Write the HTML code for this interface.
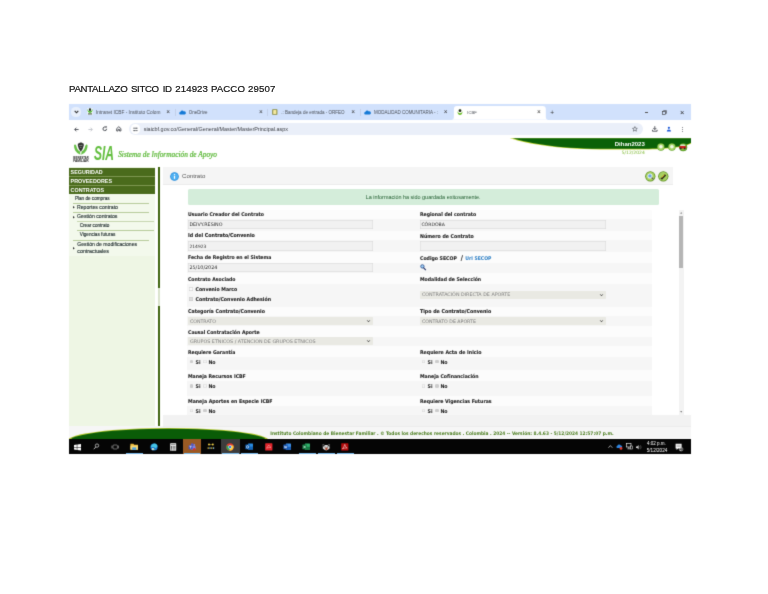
<!DOCTYPE html>
<html lang="es"><head><meta charset="utf-8"><title>PANTALLAZO SITCO ID 214923 PACCO 29507</title>
<style>
html,body{margin:0;padding:0;background:#ffffff;}
body{width:768px;height:594px;position:relative;overflow:hidden;font-family:"Liberation Sans",sans-serif;}
#shot div,#shot svg{position:absolute;display:block;}
#shot svg{overflow:visible;}
#shot{position:absolute;left:0;top:0;width:768px;height:594px;filter:url(#bl);}
#ttl{position:absolute;left:0;top:0;width:768px;height:103px;will-change:transform;}
.t{position:absolute;white-space:nowrap;line-height:1;margin:0;}
</style></head><body>
<svg width="0" height="0" style="position:absolute"><filter id="bl" x="0" y="0" width="100%" height="100%" color-interpolation-filters="sRGB"><feConvolveMatrix order="3" kernelMatrix="0.0144 0.0912 0.0144 0.0912 0.5776 0.0912 0.0144 0.0912 0.0144" edgeMode="duplicate"/></filter></svg>
<div id="shot">
<div style="left:68.75px;top:103.90px;width:622.25px;height:16.00px;background:#d1e1fc;"></div>
<div style="left:71.30px;top:107.00px;width:9.50px;height:9.80px;background:#e9f0fc;border-radius:4.6px;"></div>
<svg style="left:73.6px;top:110.2px" width="5" height="4" viewBox="0 0 5 4"><path d="M0.7 0.9 L2.5 2.8 L4.3 0.9" fill="none" stroke="#2a2a2a" stroke-width="1.1"/></svg>
<svg style="left:450px;top:106.3px" width="100" height="14" viewBox="0 0 100 14"><path d="M1.2 13.8 Q3.9 13.8 3.9 11 V3.2 Q3.9 0 7 0 H92.6 Q95.8 0 95.8 3.2 V11 Q95.8 13.8 98.5 13.8 Z" fill="#ffffff"/></svg>
<div style="left:68.75px;top:119.90px;width:622.25px;height:17.90px;background:#ffffff;"></div>
<div style="left:129.30px;top:122.70px;width:514.20px;height:12.80px;background:#eaeff9;border-radius:6.4px;"></div>
<div style="left:131.00px;top:123.80px;width:8.60px;height:10.00px;background:#ffffff;border-radius:4.6px;"></div>
<div style="left:68.75px;top:137.80px;width:622.25px;height:300.95px;background:#ffffff;"></div>
<div style="left:174.60px;top:108.60px;width:0.40px;height:7.20px;background:#c3d0e8;"></div>
<div style="left:267.30px;top:108.60px;width:0.40px;height:7.20px;background:#c3d0e8;"></div>
<div style="left:359.80px;top:108.60px;width:0.40px;height:7.20px;background:#c3d0e8;"></div>
<div style="left:86.50px;top:108.30px;width:6.20px;height:7.00px;background:#eaf1fc;border-radius:1.2px;"></div>
<svg style="left:86.6px;top:108.3px" width="6" height="7" viewBox="0 0 6 7"><path d="M0.3 1.1 Q0.5 4.7 3 4.9 Q5.5 4.7 5.7 1.1 L4.3 2.9 L3 3.3 L1.7 2.9 Z" fill="#52bd2a"/><circle cx="3" cy="1.5" r="1.15" fill="#24301a"/><path d="M2 1.8 L3 3.6 L4 1.8 Z" fill="#24301a"/><rect x="1" y="5.3" width="4" height="1.2" fill="#5a6a4a"/></svg>
<svg style="left:178.70px;top:109.90px" width="7.2" height="4.8" viewBox="0 0 72 48"><path d="M14 44 A12 12 0 0 1 14 20 A18 18 0 0 1 48 14 A15 15 0 0 1 58 44 Z" fill="#1479d6"/></svg>
<svg style="left:363.90px;top:109.90px" width="7.2" height="4.8" viewBox="0 0 72 48"><path d="M14 44 A12 12 0 0 1 14 20 A18 18 0 0 1 48 14 A15 15 0 0 1 58 44 Z" fill="#1479d6"/></svg>
<svg style="left:272.2px;top:109.2px" width="5.6" height="6" viewBox="0 0 56 60"><rect x="2" y="2" width="52" height="56" rx="6" fill="#8a8a3a"/><rect x="12" y="10" width="32" height="40" rx="6" fill="#f4e9a0"/></svg>
<svg style="left:457.4px;top:108.6px" width="6" height="7" viewBox="0 0 6 7"><circle cx="3" cy="1.7" r="1.4" fill="#1d2a10"/><path d="M0.4 2.2 Q0.6 5.6 3 6 Q5.4 5.6 5.6 2.2 Q4.6 4.2 3 4.3 Q1.4 4.2 0.4 2.2Z" fill="#6fbf2f"/></svg>
<div style="left:645.20px;top:112.30px;width:3.20px;height:0.40px;background:#555;"></div>
<svg style="left:661.8px;top:109.8px" width="5" height="5" viewBox="0 0 50 50"><rect x="6" y="16" width="28" height="28" fill="none" stroke="#333" stroke-width="6"/><path d="M16 14 V6 H44 V34 H36" fill="none" stroke="#333" stroke-width="6"/></svg>
<svg style="left:74.1px;top:126.5px" width="5" height="5" viewBox="0 0 50 50"><path d="M46 25 H10 M24 7 L6 25 L24 43" fill="none" stroke="#474b52" stroke-width="9"/></svg>
<svg style="left:88.2px;top:126.5px" width="5" height="5" viewBox="0 0 50 50"><path d="M4 25 H40 M26 7 L44 25 L26 43" fill="none" stroke="#b9bdc4" stroke-width="8"/></svg>
<svg style="left:101.9px;top:126.2px" width="5.6" height="5.6" viewBox="0 0 56 56"><path d="M46 28 A18 18 0 1 1 38 13" fill="none" stroke="#474b52" stroke-width="10"/><path d="M30 2 H48 V20 Z" fill="#474b52"/></svg>
<svg style="left:116px;top:126.2px" width="5.6" height="5.6" viewBox="0 0 56 56"><path d="M7 26 L28 7 L49 26 V50 H35 V34 H21 V50 H7 Z" fill="none" stroke="#474b52" stroke-width="9"/></svg>
<svg style="left:132.9px;top:127px" width="4.8" height="4.8" viewBox="0 0 48 48"><path d="M2 12 H24 M36 12 H46 M2 36 H12 M24 36 H46" stroke="#474b52" stroke-width="8"/><circle cx="31" cy="12" r="7" fill="#474b52"/><circle cx="17" cy="36" r="7" fill="#474b52"/></svg>
<svg style="left:632.4px;top:126.2px" width="5.8" height="5.8" viewBox="0 0 58 58"><path d="M29 6 L36 22 L53 24 L40 35 L44 52 L29 43 L14 52 L18 35 L5 24 L22 22 Z" fill="none" stroke="#474b52" stroke-width="6"/></svg>
<svg style="left:652px;top:126.2px" width="5.6" height="5.8" viewBox="0 0 56 58"><path d="M28 2 V34 M13 20 L28 36 L43 20" fill="none" stroke="#474b52" stroke-width="9"/><path d="M5 38 V52 H51 V38" fill="none" stroke="#474b52" stroke-width="9"/></svg>
<svg style="left:665.6px;top:126.2px" width="5.8" height="5.8" viewBox="0 0 58 58"><circle cx="29" cy="18" r="11" fill="#1a56d6"/><path d="M8 54 Q8 34 29 34 Q50 34 50 54 Z" fill="#1a56d6"/></svg>
<div style="left:682.10px;top:126.60px;width:0.80px;height:0.90px;background:#474b52;border-radius:50%;"></div>
<div style="left:682.10px;top:128.90px;width:0.80px;height:0.90px;background:#474b52;border-radius:50%;"></div>
<div style="left:682.10px;top:131.20px;width:0.80px;height:0.90px;background:#474b52;border-radius:50%;"></div>
<svg style="left:0;top:0" width="768" height="594" viewBox="0 0 768 594"><path d="M509.6 138.2 C530 144.2 555 148.8 600 149.4 L645 149.4 C665 149.2 684 147.6 691 143.4 L691 138.2 Z" fill="#bfd22c"/><path d="M512.6 138.2 C531.5 143.6 556 148.2 600 148.8 L645 148.8 C665 148.6 684 147 691 142.8 L691 138.2 Z" fill="#0a6108"/></svg>
<svg style="left:657.15px;top:142.60px" width="7.80" height="7.80" viewBox="0 0 20 20"><circle cx="10" cy="10" r="9.6" fill="#6aa82e"/><circle cx="10" cy="10" r="8" fill="#a5d468"/><circle cx="10" cy="9.5" r="4.6" fill="#ffffff" opacity="0.85"/></svg>
<svg style="left:667.90px;top:142.60px" width="7.80" height="7.80" viewBox="0 0 20 20"><circle cx="10" cy="10" r="9.6" fill="#6aa82e"/><circle cx="10" cy="10" r="8" fill="#a5d468"/><circle cx="10" cy="9.5" r="4.6" fill="#ffffff" opacity="0.85"/></svg>
<svg style="left:678.70px;top:142.70px" width="8.40" height="8.40" viewBox="0 0 20 20"><circle cx="10" cy="10" r="9.6" fill="#4f8f1e"/><circle cx="10" cy="10" r="8" fill="#7fbf3f"/><circle cx="10" cy="9.5" r="4.6" fill="#7fbf3f" opacity="0.85"/></svg>
<svg style="left:679.2px;top:144.4px" width="7.4" height="5.6" viewBox="0 0 74 56"><path d="M18 4 H54 L64 22 H8 Z" fill="#d8e8d0"/><rect x="2" y="20" width="70" height="24" rx="8" fill="#cf1f1c"/><circle cx="17" cy="44" r="9" fill="#222"/><circle cx="57" cy="44" r="9" fill="#222"/></svg>
<svg style="left:73px;top:142px" width="16" height="14" viewBox="0 0 160 140"><path d="M10 36 Q14 22 24 26 Q34 34 40 62 Q50 84 70 96 L74 128 Q40 118 22 86 Q10 62 10 36 Z" fill="#66c046"/><path d="M146 36 Q142 22 132 26 Q122 34 116 62 Q106 84 86 96 L82 128 Q116 118 134 86 Q146 62 146 36 Z" fill="#66c046"/><path d="M48 34 Q44 10 62 12 Q68 2 78 6 Q88 0 96 12 Q112 10 108 36 Q102 70 78 98 Q54 70 48 34 Z" fill="#30332f"/><circle cx="70" cy="36" r="6" fill="#bdbdbd"/><circle cx="88" cy="32" r="5" fill="#d2d2d2"/><circle cx="79" cy="54" r="5" fill="#aaaaaa"/></svg>
<div style="left:68.75px;top:167.00px;width:85.85px;height:259.00px;background:#eef6e4;"></div>
<div style="left:68.75px;top:194.20px;width:85.85px;height:61.80px;background:#f3f9ec;"></div>
<div style="left:68.75px;top:167.50px;width:85.85px;height:26.50px;background:#4a6b1c;"></div>
<div style="left:68.75px;top:175.60px;width:85.85px;height:0.40px;background:#7d9650;"></div>
<div style="left:68.75px;top:184.50px;width:85.85px;height:0.40px;background:#7d9650;"></div>
<svg style="left:73.00px;top:206.40px" width="1.8" height="2.4" viewBox="0 0 18 24"><path d="M1 0 L17 12 L1 24 Z" fill="#111"/></svg>
<svg style="left:73.00px;top:215.80px" width="1.8" height="2.4" viewBox="0 0 18 24"><path d="M1 0 L17 12 L1 24 Z" fill="#111"/></svg>
<svg style="left:72.90px;top:247.00px" width="1.8" height="2.4" viewBox="0 0 18 24"><path d="M1 0 L17 12 L1 24 Z" fill="#111"/></svg>
<div style="left:72.50px;top:202.60px;width:76.80px;height:0.40px;background:#b7cb9b;"></div>
<div style="left:72.50px;top:212.00px;width:76.80px;height:0.40px;background:#b7cb9b;"></div>
<div style="left:77.30px;top:220.80px;width:76.70px;height:0.30px;background:#c6d6b0;"></div>
<div style="left:77.30px;top:230.10px;width:76.70px;height:0.40px;background:#b7cb9b;"></div>
<div style="left:72.50px;top:239.80px;width:76.80px;height:0.40px;background:#b7cb9b;"></div>
<div style="left:158.00px;top:167.00px;width:2.40px;height:265.00px;background:#3f650f;"></div>
<div style="left:158.20px;top:287.50px;width:2.20px;height:18.50px;background:#d9e3cc;"></div>
<div style="left:162.60px;top:167.20px;width:510.00px;height:17.30px;background:#f5f5f5;"></div>
<div style="left:162.60px;top:184.20px;width:510.00px;height:0.40px;background:#ececec;"></div>
<svg style="left:170.2px;top:171.6px" width="9" height="9" viewBox="0 0 90 90"><circle cx="45" cy="45" r="43" fill="#1f86d8"/><circle cx="45" cy="45" r="36" fill="#4fb0f2"/><rect x="39" y="38" width="12" height="30" fill="#fff"/><circle cx="45" cy="26" r="7" fill="#fff"/></svg>
<svg style="left:644.80px;top:170.70px" width="10.60" height="10.60" viewBox="0 0 20 20"><circle cx="10" cy="10" r="9.7" fill="#5d8f22"/><circle cx="10" cy="10" r="8.3" fill="#a8d162"/><circle cx="9.3" cy="9.3" r="4.8" fill="#e9f2ff"/><circle cx="9.3" cy="9.3" r="3.2" fill="#6fa4e0"/><path d="M12.5 12.5 L16 16" stroke="#555" stroke-width="2"/></svg>
<svg style="left:657.50px;top:170.70px" width="10.60" height="10.60" viewBox="0 0 20 20"><circle cx="10" cy="10" r="9.7" fill="#5d8f22"/><circle cx="10" cy="10" r="8.3" fill="#a8d162"/><path d="M4.5 13.5 L12.5 5.5 L15.5 8.5 L7.5 16.5 Z" fill="#2b2b1a"/><path d="M6 12 L12 6 L13 7 L7 13 Z" fill="#f2d23a"/></svg>
<div style="left:188.00px;top:189.00px;width:471.00px;height:16.20px;background:#d4edda;border-radius:1.6px;"></div>
<div style="left:187.20px;top:209.50px;width:465.10px;height:205.00px;background:#fcfcfc;"></div>
<div style="left:187.20px;top:218.75px;width:465.10px;height:12.00px;background:#f6f6f6;"></div>
<div style="left:187.20px;top:240.00px;width:465.10px;height:11.75px;background:#f6f6f6;"></div>
<div style="left:187.20px;top:262.50px;width:465.10px;height:10.00px;background:#f6f6f6;"></div>
<div style="left:187.20px;top:284.00px;width:465.10px;height:22.80px;background:#f6f6f6;"></div>
<div style="left:187.20px;top:316.25px;width:465.10px;height:10.00px;background:#f6f6f6;"></div>
<div style="left:187.20px;top:336.50px;width:465.10px;height:9.50px;background:#f6f6f6;"></div>
<div style="left:187.20px;top:357.00px;width:465.10px;height:13.00px;background:#f6f6f6;"></div>
<div style="left:187.20px;top:381.25px;width:465.10px;height:14.25px;background:#f6f6f6;"></div>
<div style="left:187.20px;top:406.25px;width:465.10px;height:8.25px;background:#f6f6f6;"></div>
<div style="left:188.00px;top:220.00px;width:184.75px;height:9.30px;background:#f1f1f1;box-shadow:inset 0 0 0 0.45px #d6d6d6;"></div>
<div style="left:188.00px;top:241.25px;width:184.75px;height:9.25px;background:#f1f1f1;box-shadow:inset 0 0 0 0.45px #d6d6d6;"></div>
<div style="left:188.00px;top:263.25px;width:184.75px;height:8.55px;background:#f1f1f1;box-shadow:inset 0 0 0 0.45px #d6d6d6;"></div>
<div style="left:189.30px;top:286.90px;width:4.20px;height:4.20px;background:#fdfdfd;box-shadow:inset 0 0 0 0.4px #c4c4c4;border-radius:0.6px;"></div>
<div style="left:189.30px;top:296.90px;width:4.20px;height:4.20px;background:#dedede;box-shadow:inset 0 0 0 0.4px #c4c4c4;border-radius:0.6px;"></div>
<div style="left:188.00px;top:317.00px;width:184.75px;height:7.60px;background:#e9e9e3;border-radius:0.8px;"></div>
<svg style="left:366.85px;top:319.70px" width="3" height="2.4" viewBox="0 0 30 24"><path d="M3 4 L15 18 L27 4" fill="none" stroke="#222" stroke-width="8"/></svg>
<div style="left:188.00px;top:337.40px;width:184.75px;height:7.20px;background:#e9e9e3;border-radius:0.8px;"></div>
<svg style="left:366.85px;top:339.90px" width="3" height="2.4" viewBox="0 0 30 24"><path d="M3 4 L15 18 L27 4" fill="none" stroke="#222" stroke-width="8"/></svg>
<div style="left:189.70px;top:359.90px;width:3.40px;height:3.40px;background:#cdcdcd;border-radius:50%;box-shadow:inset 0 0 0 0.35px #c9c9c9;"></div>
<div style="left:203.30px;top:359.90px;width:3.40px;height:3.40px;background:#f4f4f4;border-radius:50%;box-shadow:inset 0 0 0 0.35px #c9c9c9;"></div>
<div style="left:189.70px;top:384.25px;width:3.40px;height:3.40px;background:#cdcdcd;border-radius:50%;box-shadow:inset 0 0 0 0.35px #c9c9c9;"></div>
<div style="left:203.30px;top:384.25px;width:3.40px;height:3.40px;background:#f4f4f4;border-radius:50%;box-shadow:inset 0 0 0 0.35px #c9c9c9;"></div>
<div style="left:189.70px;top:408.50px;width:3.40px;height:3.40px;background:#f4f4f4;border-radius:50%;box-shadow:inset 0 0 0 0.35px #c9c9c9;"></div>
<div style="left:203.30px;top:408.50px;width:3.40px;height:3.40px;background:#cdcdcd;border-radius:50%;box-shadow:inset 0 0 0 0.35px #c9c9c9;"></div>
<div style="left:420.00px;top:220.00px;width:185.50px;height:9.30px;background:#f1f1f1;box-shadow:inset 0 0 0 0.45px #d6d6d6;"></div>
<div style="left:420.00px;top:241.25px;width:185.50px;height:9.25px;background:#f1f1f1;box-shadow:inset 0 0 0 0.45px #d6d6d6;"></div>
<svg style="left:420.2px;top:264.4px" width="6.2" height="6.4" viewBox="0 0 62 64"><circle cx="24" cy="24" r="17" fill="#9fd0f5" stroke="#274a8c" stroke-width="8"/><path d="M37 38 L56 58" stroke="#1e2f66" stroke-width="11" stroke-linecap="round"/></svg>
<div style="left:420.00px;top:290.50px;width:185.50px;height:8.30px;background:#e9e9e3;border-radius:0.8px;"></div>
<svg style="left:599.60px;top:293.55px" width="3" height="2.4" viewBox="0 0 30 24"><path d="M3 4 L15 18 L27 4" fill="none" stroke="#222" stroke-width="8"/></svg>
<div style="left:420.00px;top:317.00px;width:185.50px;height:7.60px;background:#e9e9e3;border-radius:0.8px;"></div>
<svg style="left:599.60px;top:319.70px" width="3" height="2.4" viewBox="0 0 30 24"><path d="M3 4 L15 18 L27 4" fill="none" stroke="#222" stroke-width="8"/></svg>
<div style="left:421.70px;top:359.90px;width:3.40px;height:3.40px;background:#f4f4f4;border-radius:50%;box-shadow:inset 0 0 0 0.35px #c9c9c9;"></div>
<div style="left:435.30px;top:359.90px;width:3.40px;height:3.40px;background:#cdcdcd;border-radius:50%;box-shadow:inset 0 0 0 0.35px #c9c9c9;"></div>
<div style="left:421.70px;top:384.25px;width:3.40px;height:3.40px;background:#f4f4f4;border-radius:50%;box-shadow:inset 0 0 0 0.35px #c9c9c9;"></div>
<div style="left:435.30px;top:384.25px;width:3.40px;height:3.40px;background:#cdcdcd;border-radius:50%;box-shadow:inset 0 0 0 0.35px #c9c9c9;"></div>
<div style="left:421.70px;top:408.50px;width:3.40px;height:3.40px;background:#f4f4f4;border-radius:50%;box-shadow:inset 0 0 0 0.35px #c9c9c9;"></div>
<div style="left:435.30px;top:408.50px;width:3.40px;height:3.40px;background:#cdcdcd;border-radius:50%;box-shadow:inset 0 0 0 0.35px #c9c9c9;"></div>
<div style="left:678.80px;top:210.00px;width:5.10px;height:204.50px;background:#f3f3f3;"></div>
<div style="left:679.40px;top:216.00px;width:4.10px;height:52.00px;background:#b5b5b5;"></div>
<svg style="left:680.1px;top:211.6px" width="2.4" height="1.8" viewBox="0 0 24 18"><path d="M2 16 L12 3 L22 16 Z" fill="#555"/></svg>
<svg style="left:680.1px;top:410.8px" width="2.4" height="1.8" viewBox="0 0 24 18"><path d="M2 2 L12 15 L22 2 Z" fill="#444"/></svg>
<div style="left:162.60px;top:414.50px;width:528.40px;height:11.70px;background:#f2f2f2;"></div>
<div style="left:68.75px;top:426.20px;width:622.25px;height:12.60px;background:#f6f6f6;"></div>
<div style="left:68.75px;top:437.60px;width:622.25px;height:1.20px;background:#fdfdfd;"></div>
<div style="left:162.60px;top:426.00px;width:528.40px;height:0.40px;background:#ececec;"></div>
<svg style="left:68.75px;top:426.6px;overflow:hidden" width="200" height="12.2" viewBox="0 0 200 12.2"><ellipse cx="99.3" cy="13.4" rx="100.4" ry="12.4" fill="#b4c92a"/><ellipse cx="99.3" cy="13.9" rx="98.6" ry="12.1" fill="#0a5c07"/></svg>
<div style="left:68.75px;top:438.80px;width:622.25px;height:14.95px;background:#050505;"></div>
<div style="left:182.60px;top:438.80px;width:18.80px;height:14.95px;background:#9a5a24;"></div>
<div style="left:220.90px;top:438.80px;width:18.70px;height:14.95px;background:#3d3d3d;"></div>
<div style="left:126.00px;top:453.00px;width:16.80px;height:0.75px;background:#76b9ed;"></div>
<div style="left:241.40px;top:453.00px;width:16.80px;height:0.75px;background:#76b9ed;"></div>
<div style="left:299.00px;top:453.00px;width:16.80px;height:0.75px;background:#76b9ed;"></div>
<div style="left:318.20px;top:453.00px;width:16.80px;height:0.75px;background:#76b9ed;"></div>
<div style="left:337.40px;top:453.00px;width:16.80px;height:0.75px;background:#76b9ed;"></div>
<div style="left:221.80px;top:453.00px;width:16.80px;height:0.75px;background:#76b9ed;"></div>
<div style="left:183.60px;top:453.00px;width:16.80px;height:0.75px;background:#76b9ed;"></div>
<svg style="left:73.9px;top:443.6px" width="7" height="6.4" viewBox="0 0 70 64"><path d="M0 9 L28 5 V30 H0 Z M33 4.3 L70 0 V30 H33 Z M0 35 H28 V59 L0 55 Z M33 35 H70 V64 L33 59.7 Z" fill="#ffffff"/></svg>
<svg style="left:92.85px;top:443.20px" width="6.8" height="6.8" viewBox="0 0 68 68"><circle cx="40" cy="26" r="17" fill="none" stroke="#fff" stroke-width="6"/><path d="M28 40 L8 62" stroke="#fff" stroke-width="7"/></svg>
<svg style="left:110.80px;top:443.60px" width="8.4" height="6" viewBox="0 0 84 60"><rect x="20" y="10" width="44" height="40" rx="8" fill="none" stroke="#e8e8e8" stroke-width="4.5"/><path d="M9 16 V44 M75 16 V44" stroke="#e8e8e8" stroke-width="4.5"/></svg>
<svg style="left:130.20px;top:442.80px" width="8.4" height="7.4" viewBox="0 0 84 74"><path d="M4 8 H34 L42 18 H80 V66 H4 Z" fill="#e9b93a"/><rect x="4" y="26" width="76" height="42" fill="#f7d773"/><rect x="22" y="44" width="40" height="24" fill="#4aa3e8"/></svg>
<svg style="left:149.80px;top:442.60px" width="8" height="8" viewBox="0 0 80 80"><circle cx="40" cy="40" r="36" fill="#1b78d0"/><path d="M8 46 Q10 12 44 6 Q74 10 74 36 Q70 52 50 50 Q44 38 30 40 Q14 44 8 46Z" fill="#45c5e6"/><path d="M20 52 Q30 76 62 66 Q40 70 36 50 Z" fill="#7be08a"/><circle cx="28" cy="62" r="11" fill="#d9d9d9"/></svg>
<svg style="left:169.60px;top:442.60px" width="6.4" height="8" viewBox="0 0 64 80"><rect x="2" y="2" width="60" height="76" rx="5" fill="#ffffff"/><rect x="9" y="9" width="46" height="14" fill="#9a9a9a"/><rect x="9" y="30" width="11" height="7" fill="#222"/><rect x="9" y="42" width="11" height="7" fill="#222"/><rect x="9" y="54" width="11" height="7" fill="#222"/><rect x="9" y="66" width="11" height="7" fill="#222"/><rect x="26" y="30" width="11" height="7" fill="#222"/><rect x="26" y="42" width="11" height="7" fill="#222"/><rect x="26" y="54" width="11" height="7" fill="#222"/><rect x="26" y="66" width="11" height="7" fill="#222"/><rect x="43" y="30" width="11" height="7" fill="#222"/><rect x="43" y="42" width="11" height="7" fill="#222"/><rect x="43" y="54" width="11" height="7" fill="#222"/><rect x="43" y="66" width="11" height="7" fill="#222"/></svg>
<svg style="left:187.80px;top:442.60px" width="8.4" height="8" viewBox="0 0 84 80"><circle cx="62" cy="20" r="10" fill="#7b83eb"/><circle cx="42" cy="16" r="13" fill="#5059c9"/><rect x="26" y="30" width="50" height="36" rx="8" fill="#7b83eb"/><rect x="6" y="22" width="40" height="40" rx="5" fill="#4b53bc"/><path d="M14 32 H38 M26 32 V54" stroke="#fff" stroke-width="6"/><circle cx="62" cy="62" r="12" fill="#d92f2f"/></svg>
<svg style="left:207.00px;top:443.00px" width="8" height="7.2" viewBox="0 0 80 72"><circle cx="20" cy="16" r="10" fill="#f3d34a"/><circle cx="58" cy="16" r="10" fill="#f3d34a"/><path d="M30 16 H48" stroke="#f3d34a" stroke-width="5"/><rect x="6" y="44" width="12" height="14" fill="#f3d34a"/><rect x="24" y="44" width="12" height="14" fill="#9ad0f0"/><rect x="42" y="44" width="12" height="14" fill="#f3d34a"/><rect x="60" y="44" width="12" height="14" fill="#9ad0f0"/></svg>
<svg style="left:226.30px;top:442.60px" width="8" height="8" viewBox="0 0 80 80"><circle cx="40" cy="40" r="37" fill="#e33b2e"/><path d="M40 40 L8 22 A37 37 0 0 0 34 76.5 Z" fill="#2da94f"/><path d="M40 40 L34 76.5 A37 37 0 0 0 74 26 L40 26 Z" fill="#fdd036"/><circle cx="40" cy="40" r="17" fill="#fff"/><circle cx="40" cy="40" r="13" fill="#3b7ded"/></svg>
<svg style="left:245.20px;top:442.80px" width="8.4" height="7.6" viewBox="0 0 84 76"><rect x="30" y="6" width="50" height="60" rx="5" fill="#2a8be0"/><rect x="30" y="36" width="50" height="30" fill="#1565b8"/><rect x="4" y="16" width="44" height="46" rx="5" fill="#0f5fb4"/><ellipse cx="26" cy="39" rx="11" ry="13" fill="none" stroke="#fff" stroke-width="6"/></svg>
<svg style="left:264.80px;top:442.70px" width="7.6" height="7.8" viewBox="0 0 76 78"><rect x="2" y="2" width="72" height="74" rx="6" fill="#e2262c"/><path d="M16 52 Q30 30 38 20 Q44 34 60 44 Q40 42 16 52Z" fill="none" stroke="#ffd7d7" stroke-width="4"/></svg>
<svg style="left:283.40px;top:442.80px" width="8.4" height="7.6" viewBox="0 0 84 76"><rect x="28" y="6" width="52" height="62" rx="5" fill="#3d8fe6"/><rect x="28" y="38" width="52" height="30" fill="#1b5fb8"/><rect x="4" y="16" width="44" height="46" rx="5" fill="#1856b0"/><path d="M13 28 L20 52 L26 34 L32 52 L39 28" fill="none" stroke="#fff" stroke-width="5"/></svg>
<svg style="left:302.40px;top:442.80px" width="8.4" height="7.6" viewBox="0 0 84 76"><rect x="28" y="6" width="52" height="62" rx="5" fill="#2fae6a"/><rect x="28" y="38" width="52" height="30" fill="#197a45"/><rect x="4" y="16" width="44" height="46" rx="5" fill="#117a41"/><path d="M15 28 L37 52 M37 28 L15 52" stroke="#fff" stroke-width="6"/></svg>
<svg style="left:321.60px;top:442.60px" width="8.4" height="8" viewBox="0 0 84 80"><path d="M8 10 L26 20 H58 L76 10 V56 Q60 74 42 74 Q24 74 8 56 Z" fill="#d8d8d8"/><path d="M8 10 L30 26 L8 40 Z M76 10 L54 26 L76 40 Z" fill="#2a2a2a"/><circle cx="44" cy="58" r="12" fill="#b0452a"/><circle cx="30" cy="40" r="5" fill="#111"/><circle cx="54" cy="40" r="5" fill="#111"/></svg>
<svg style="left:340.80px;top:442.70px" width="7.6" height="7.8" viewBox="0 0 76 78"><rect x="2" y="2" width="72" height="74" rx="6" fill="#b30b0b"/><path d="M14 58 Q30 44 38 14 Q42 40 62 50 Q38 46 14 58Z" fill="none" stroke="#fff" stroke-width="5"/></svg>
<svg style="left:608.2px;top:445px" width="4.8" height="3.2" viewBox="0 0 48 32"><path d="M4 28 L24 6 L44 28" fill="none" stroke="#fff" stroke-width="6"/></svg>
<svg style="left:616.4px;top:443.6px" width="7" height="6.4" viewBox="0 0 70 64"><path d="M10 40 A12 12 0 0 1 14 18 A18 18 0 0 1 48 16 A13 13 0 0 1 56 40 Z" fill="#2f86e0"/><circle cx="50" cy="44" r="14" fill="#e23a2e"/></svg>
<svg style="left:625.8px;top:443.4px" width="7" height="6.8" viewBox="0 0 70 68"><rect x="6" y="6" width="44" height="34" fill="none" stroke="#fff" stroke-width="6"/><path d="M28 40 V56 M14 58 H42" stroke="#fff" stroke-width="6"/><rect x="46" y="30" width="18" height="30" fill="#050505" stroke="#fff" stroke-width="5"/></svg>
<svg style="left:634.6px;top:443.6px" width="7" height="6.4" viewBox="0 0 70 64"><path d="M10 24 H22 L36 10 V54 L22 40 H10 Z" fill="#d8d8d8"/><path d="M46 20 Q56 32 46 44 M54 12 Q70 32 54 52" fill="none" stroke="#777" stroke-width="5"/></svg>
<svg style="left:675px;top:442.8px" width="8.4" height="8.4" viewBox="0 0 84 84"><path d="M6 8 H66 V56 H30 L16 70 V56 H6 Z" fill="#fff"/><path d="M16 22 H56 M16 34 H56" stroke="#555" stroke-width="4"/><circle cx="62" cy="62" r="18" fill="#2b2b2b" stroke="#fff" stroke-width="4"/></svg>
<span class="t" style="left:96.00px;top:111.03px;font-size:4.775px;font-family:'Liberation Sans', sans-serif;font-weight:400;font-style:normal;color:#4a4f57;">Intranet ICBF - Instituto Colom</span>
<span class="t" style="left:166.20px;top:109.03px;font-size:6.500px;font-family:'Liberation Sans', sans-serif;font-weight:400;font-style:normal;color:#333;">×</span>
<span class="t" style="left:188.75px;top:111.03px;font-size:4.441px;font-family:'Liberation Sans', sans-serif;font-weight:400;font-style:normal;color:#4a4f57;">OneDrive</span>
<span class="t" style="left:259.00px;top:109.03px;font-size:6.500px;font-family:'Liberation Sans', sans-serif;font-weight:400;font-style:normal;color:#333;">×</span>
<span class="t" style="left:281.30px;top:111.03px;font-size:4.525px;font-family:'Liberation Sans', sans-serif;font-weight:400;font-style:normal;color:#4a4f57;">.: Bandeja de entrada - ORFEO</span>
<span class="t" style="left:351.25px;top:109.03px;font-size:6.500px;font-family:'Liberation Sans', sans-serif;font-weight:400;font-style:normal;color:#333;">×</span>
<span class="t" style="left:374.00px;top:111.03px;font-size:4.494px;font-family:'Liberation Sans', sans-serif;font-weight:400;font-style:normal;color:#4a4f57;">MODALIDAD COMUNITARIA - :</span>
<span class="t" style="left:443.70px;top:109.03px;font-size:6.500px;font-family:'Liberation Sans', sans-serif;font-weight:400;font-style:normal;color:#333;">×</span>
<span class="t" style="left:467.30px;top:111.03px;font-size:4.183px;font-family:'Liberation Sans', sans-serif;font-weight:400;font-style:normal;color:#4a4f57;">ICBF</span>
<span class="t" style="left:537.00px;top:109.03px;font-size:6.500px;font-family:'Liberation Sans', sans-serif;font-weight:400;font-style:normal;color:#333;">×</span>
<span class="t" style="left:550.30px;top:110.04px;font-size:6.500px;font-family:'Liberation Sans', sans-serif;font-weight:400;font-style:normal;color:#333;">+</span>
<span class="t" style="left:680.00px;top:109.02px;font-size:7.500px;font-family:'Liberation Sans', sans-serif;font-weight:400;font-style:normal;color:#222;">×</span>
<span class="t" style="left:143.70px;top:127.03px;font-size:5.449px;font-family:'Liberation Sans', sans-serif;font-weight:400;font-style:normal;color:#3b3e44;">siaicbf.gov.co/General/General/Master/MasterPrincipal.aspx</span>
<span class="t" style="left:614.75px;top:141.03px;font-size:6.009px;font-family:'Liberation Sans', sans-serif;font-weight:700;font-style:normal;color:#ffffff;">Dihan2023</span>
<span class="t" style="left:621.75px;top:151.03px;font-size:4.491px;font-family:'DejaVu Sans', 'Liberation Sans', sans-serif;font-weight:400;font-style:normal;color:#7cb82f;">5/12/2024</span>
<span class="t" style="left:73.20px;top:158.03px;font-size:2.716px;font-family:'Liberation Sans', sans-serif;font-weight:700;font-style:normal;color:#222;">BIENESTAR</span>
<span class="t" style="left:73.20px;top:160.03px;font-size:3.266px;font-family:'Liberation Sans', sans-serif;font-weight:700;font-style:normal;color:#222;">FAMILIAR</span>
<span class="t" style="left:93.90px;top:147.03px;font-size:12.064px;font-family:'Liberation Sans', sans-serif;font-weight:700;font-style:italic;color:#62be3e;transform:scaleY(1.72);transform-origin:50% 50%;">SIA</span>
<span class="t" style="left:118.20px;top:151.02px;font-size:7.343px;font-family:'Liberation Serif', serif;font-weight:400;font-style:italic;color:#5cb838;-webkit-text-stroke:0.22px #5cb838;">Sistema de Información de Apoyo</span>
<span class="t" style="left:70.60px;top:170.03px;font-size:5.358px;font-family:'Liberation Sans', sans-serif;font-weight:700;font-style:normal;color:#fff;">SEGURIDAD</span>
<span class="t" style="left:70.60px;top:179.03px;font-size:5.366px;font-family:'Liberation Sans', sans-serif;font-weight:700;font-style:normal;color:#fff;">PROVEEDORES</span>
<span class="t" style="left:70.60px;top:188.04px;font-size:5.365px;font-family:'Liberation Sans', sans-serif;font-weight:700;font-style:normal;color:#fff;">CONTRATOS</span>
<span class="t" style="left:74.90px;top:197.03px;font-size:4.633px;font-family:'Liberation Sans', sans-serif;font-weight:400;font-style:normal;color:#1d2a2c;-webkit-text-stroke:0.12px #1d2a2c;">Plan de compras</span>
<span class="t" style="left:77.00px;top:205.03px;font-size:5.172px;font-family:'Liberation Sans', sans-serif;font-weight:400;font-style:normal;color:#1d2a2c;-webkit-text-stroke:0.12px #1d2a2c;">Reportes contrato</span>
<span class="t" style="left:77.00px;top:214.03px;font-size:5.166px;font-family:'Liberation Sans', sans-serif;font-weight:400;font-style:normal;color:#1d2a2c;-webkit-text-stroke:0.12px #1d2a2c;">Gestión contratos</span>
<span class="t" style="left:79.70px;top:224.03px;font-size:4.651px;font-family:'Liberation Sans', sans-serif;font-weight:400;font-style:normal;color:#1d2a2c;-webkit-text-stroke:0.12px #1d2a2c;">Crear contrato</span>
<span class="t" style="left:79.70px;top:233.02px;font-size:4.660px;font-family:'Liberation Sans', sans-serif;font-weight:400;font-style:normal;color:#1d2a2c;-webkit-text-stroke:0.12px #1d2a2c;">Vigencias futuras</span>
<span class="t" style="left:77.30px;top:242.02px;font-size:5.101px;font-family:'Liberation Sans', sans-serif;font-weight:400;font-style:normal;color:#1d2a2c;-webkit-text-stroke:0.12px #1d2a2c;">Gestión de modificaciones</span>
<span class="t" style="left:77.30px;top:249.02px;font-size:5.309px;font-family:'Liberation Sans', sans-serif;font-weight:400;font-style:normal;color:#1d2a2c;-webkit-text-stroke:0.12px #1d2a2c;">contractuales</span>
<span class="t" style="left:182.00px;top:173.03px;font-size:6.083px;font-family:'Liberation Sans', sans-serif;font-weight:400;font-style:normal;color:#555;">Contrato</span>
<span class="t" style="left:365.70px;top:195.04px;font-size:5.467px;font-family:'Liberation Sans', sans-serif;font-weight:400;font-style:normal;color:#1f5c2e;">La información ha sido guardada exitosamente.</span>
<span class="t" style="left:188.00px;top:212.03px;font-size:5.126px;font-family:'DejaVu Sans Condensed', 'DejaVu Sans', sans-serif;font-weight:700;font-style:normal;color:#1c1c1c;-webkit-text-stroke:0.08px #1c1c1c;">Usuario Creador del Contrato</span>
<span class="t" style="left:189.40px;top:223.03px;font-size:4.810px;font-family:'DejaVu Sans', 'Liberation Sans', sans-serif;font-weight:400;font-style:normal;color:#2c2c2c;">DEIVY.RESINO</span>
<span class="t" style="left:188.00px;top:233.03px;font-size:5.305px;font-family:'DejaVu Sans Condensed', 'DejaVu Sans', sans-serif;font-weight:700;font-style:normal;color:#1c1c1c;-webkit-text-stroke:0.08px #1c1c1c;">Id del Contrato/Convenio</span>
<span class="t" style="left:189.40px;top:245.03px;font-size:4.462px;font-family:'DejaVu Sans', 'Liberation Sans', sans-serif;font-weight:400;font-style:normal;color:#2c2c2c;">214923</span>
<span class="t" style="left:188.00px;top:255.03px;font-size:5.112px;font-family:'DejaVu Sans Condensed', 'DejaVu Sans', sans-serif;font-weight:700;font-style:normal;color:#1c1c1c;-webkit-text-stroke:0.08px #1c1c1c;">Fecha de Registro en el Sistema</span>
<span class="t" style="left:189.40px;top:265.03px;font-size:4.864px;font-family:'DejaVu Sans', 'Liberation Sans', sans-serif;font-weight:400;font-style:normal;color:#2c2c2c;">25/10/2024</span>
<span class="t" style="left:188.00px;top:277.03px;font-size:5.104px;font-family:'DejaVu Sans Condensed', 'DejaVu Sans', sans-serif;font-weight:700;font-style:normal;color:#1c1c1c;-webkit-text-stroke:0.08px #1c1c1c;">Contrato Asociado</span>
<span class="t" style="left:195.50px;top:287.03px;font-size:5.170px;font-family:'DejaVu Sans Condensed', 'DejaVu Sans', sans-serif;font-weight:700;font-style:normal;color:#1c1c1c;-webkit-text-stroke:0.08px #1c1c1c;">Convenio Marco</span>
<span class="t" style="left:195.50px;top:297.03px;font-size:5.237px;font-family:'DejaVu Sans Condensed', 'DejaVu Sans', sans-serif;font-weight:700;font-style:normal;color:#1c1c1c;-webkit-text-stroke:0.08px #1c1c1c;">Contrato/Convenio Adhesión</span>
<span class="t" style="left:188.00px;top:309.03px;font-size:5.248px;font-family:'DejaVu Sans Condensed', 'DejaVu Sans', sans-serif;font-weight:700;font-style:normal;color:#1c1c1c;-webkit-text-stroke:0.08px #1c1c1c;">Categoría Contrato/Convenio</span>
<span class="t" style="left:189.90px;top:320.02px;font-size:4.744px;font-family:'DejaVu Sans', 'Liberation Sans', sans-serif;font-weight:400;font-style:normal;color:#7d7d7d;">CONTRATO</span>
<span class="t" style="left:188.00px;top:330.03px;font-size:5.136px;font-family:'DejaVu Sans Condensed', 'DejaVu Sans', sans-serif;font-weight:700;font-style:normal;color:#1c1c1c;-webkit-text-stroke:0.08px #1c1c1c;">Causal Contratación Aporte</span>
<span class="t" style="left:189.90px;top:340.03px;font-size:4.831px;font-family:'DejaVu Sans', 'Liberation Sans', sans-serif;font-weight:400;font-style:normal;color:#7d7d7d;">GRUPOS ETNICOS / ATENCION DE GRUPOS ETNICOS</span>
<span class="t" style="left:188.00px;top:350.03px;font-size:5.118px;font-family:'DejaVu Sans Condensed', 'DejaVu Sans', sans-serif;font-weight:700;font-style:normal;color:#1c1c1c;-webkit-text-stroke:0.08px #1c1c1c;">Requiere Garantía</span>
<span class="t" style="left:195.60px;top:360.03px;font-size:5.227px;font-family:'DejaVu Sans Condensed', 'DejaVu Sans', sans-serif;font-weight:700;font-style:normal;color:#1c1c1c;">Si</span>
<span class="t" style="left:208.40px;top:360.03px;font-size:5.257px;font-family:'DejaVu Sans Condensed', 'DejaVu Sans', sans-serif;font-weight:700;font-style:normal;color:#1c1c1c;">No</span>
<span class="t" style="left:188.00px;top:374.03px;font-size:5.172px;font-family:'DejaVu Sans Condensed', 'DejaVu Sans', sans-serif;font-weight:700;font-style:normal;color:#1c1c1c;-webkit-text-stroke:0.08px #1c1c1c;">Maneja Recursos ICBF</span>
<span class="t" style="left:195.60px;top:384.03px;font-size:5.227px;font-family:'DejaVu Sans Condensed', 'DejaVu Sans', sans-serif;font-weight:700;font-style:normal;color:#1c1c1c;">Si</span>
<span class="t" style="left:208.40px;top:384.03px;font-size:5.257px;font-family:'DejaVu Sans Condensed', 'DejaVu Sans', sans-serif;font-weight:700;font-style:normal;color:#1c1c1c;">No</span>
<span class="t" style="left:188.00px;top:399.03px;font-size:5.194px;font-family:'DejaVu Sans Condensed', 'DejaVu Sans', sans-serif;font-weight:700;font-style:normal;color:#1c1c1c;-webkit-text-stroke:0.08px #1c1c1c;">Maneja Aportes en Especie ICBF</span>
<span class="t" style="left:195.60px;top:409.03px;font-size:5.227px;font-family:'DejaVu Sans Condensed', 'DejaVu Sans', sans-serif;font-weight:700;font-style:normal;color:#1c1c1c;">Si</span>
<span class="t" style="left:208.40px;top:409.03px;font-size:5.257px;font-family:'DejaVu Sans Condensed', 'DejaVu Sans', sans-serif;font-weight:700;font-style:normal;color:#1c1c1c;">No</span>
<span class="t" style="left:420.00px;top:212.03px;font-size:5.156px;font-family:'DejaVu Sans Condensed', 'DejaVu Sans', sans-serif;font-weight:700;font-style:normal;color:#1c1c1c;-webkit-text-stroke:0.08px #1c1c1c;">Regional del contrato</span>
<span class="t" style="left:421.40px;top:223.03px;font-size:4.626px;font-family:'DejaVu Sans', 'Liberation Sans', sans-serif;font-weight:400;font-style:normal;color:#2c2c2c;">CÓRDOBA</span>
<span class="t" style="left:420.00px;top:234.03px;font-size:5.192px;font-family:'DejaVu Sans Condensed', 'DejaVu Sans', sans-serif;font-weight:700;font-style:normal;color:#1c1c1c;-webkit-text-stroke:0.08px #1c1c1c;">Número de Contrato</span>
<span class="t" style="left:420.00px;top:256.03px;font-size:5.155px;font-family:'DejaVu Sans Condensed', 'DejaVu Sans', sans-serif;font-weight:700;font-style:normal;color:#1c1c1c;-webkit-text-stroke:0.08px #1c1c1c;">Codigo SECOP</span>
<span class="t" style="left:460.80px;top:255.03px;font-size:6.673px;font-family:'DejaVu Sans Condensed', 'DejaVu Sans', sans-serif;font-weight:700;font-style:normal;color:#1c1c1c;-webkit-text-stroke:0.08px #1c1c1c;">/</span>
<span class="t" style="left:465.30px;top:256.03px;font-size:5.099px;font-family:'DejaVu Sans Condensed', 'DejaVu Sans', sans-serif;font-weight:700;font-style:normal;color:#2a7dc4;">Url SECOP</span>
<span class="t" style="left:420.00px;top:277.03px;font-size:5.126px;font-family:'DejaVu Sans Condensed', 'DejaVu Sans', sans-serif;font-weight:700;font-style:normal;color:#1c1c1c;-webkit-text-stroke:0.08px #1c1c1c;">Modalidad de Selección</span>
<span class="t" style="left:421.90px;top:293.03px;font-size:4.805px;font-family:'DejaVu Sans', 'Liberation Sans', sans-serif;font-weight:400;font-style:normal;color:#7d7d7d;">CONTRATACIÓN DIRECTA DE APORTE</span>
<span class="t" style="left:420.00px;top:309.03px;font-size:5.285px;font-family:'DejaVu Sans Condensed', 'DejaVu Sans', sans-serif;font-weight:700;font-style:normal;color:#1c1c1c;-webkit-text-stroke:0.08px #1c1c1c;">Tipo de Contrato/Convenio</span>
<span class="t" style="left:421.90px;top:320.02px;font-size:4.717px;font-family:'DejaVu Sans', 'Liberation Sans', sans-serif;font-weight:400;font-style:normal;color:#7d7d7d;">CONTRATO DE APORTE</span>
<span class="t" style="left:420.00px;top:350.03px;font-size:5.226px;font-family:'DejaVu Sans Condensed', 'DejaVu Sans', sans-serif;font-weight:700;font-style:normal;color:#1c1c1c;-webkit-text-stroke:0.08px #1c1c1c;">Requiere Acta de Inicio</span>
<span class="t" style="left:427.60px;top:360.03px;font-size:5.227px;font-family:'DejaVu Sans Condensed', 'DejaVu Sans', sans-serif;font-weight:700;font-style:normal;color:#1c1c1c;">Si</span>
<span class="t" style="left:440.40px;top:360.03px;font-size:5.257px;font-family:'DejaVu Sans Condensed', 'DejaVu Sans', sans-serif;font-weight:700;font-style:normal;color:#1c1c1c;">No</span>
<span class="t" style="left:420.00px;top:374.03px;font-size:5.150px;font-family:'DejaVu Sans Condensed', 'DejaVu Sans', sans-serif;font-weight:700;font-style:normal;color:#1c1c1c;-webkit-text-stroke:0.08px #1c1c1c;">Maneja Cofinanciación</span>
<span class="t" style="left:427.60px;top:384.03px;font-size:5.227px;font-family:'DejaVu Sans Condensed', 'DejaVu Sans', sans-serif;font-weight:700;font-style:normal;color:#1c1c1c;">Si</span>
<span class="t" style="left:440.40px;top:384.03px;font-size:5.257px;font-family:'DejaVu Sans Condensed', 'DejaVu Sans', sans-serif;font-weight:700;font-style:normal;color:#1c1c1c;">No</span>
<span class="t" style="left:420.00px;top:399.03px;font-size:5.157px;font-family:'DejaVu Sans Condensed', 'DejaVu Sans', sans-serif;font-weight:700;font-style:normal;color:#1c1c1c;-webkit-text-stroke:0.08px #1c1c1c;">Requiere Vigencias Futuras</span>
<span class="t" style="left:427.60px;top:409.03px;font-size:5.227px;font-family:'DejaVu Sans Condensed', 'DejaVu Sans', sans-serif;font-weight:700;font-style:normal;color:#1c1c1c;">Si</span>
<span class="t" style="left:440.40px;top:409.03px;font-size:5.257px;font-family:'DejaVu Sans Condensed', 'DejaVu Sans', sans-serif;font-weight:700;font-style:normal;color:#1c1c1c;">No</span>
<span class="t" style="left:270.30px;top:432.03px;font-size:4.833px;font-family:'DejaVu Sans Condensed', 'DejaVu Sans', sans-serif;font-weight:700;font-style:normal;color:#4a7d1e;">Instituto Colombiano de Bienestar Familiar . © Todos los derechos reservados . Colombia . 2024 -- Versión: 8.4.63 - 5/12/2024 12:57:07 p.m.</span>
<span class="t" style="left:646.90px;top:442.03px;font-size:4.513px;font-family:'Liberation Sans', sans-serif;font-weight:400;font-style:normal;color:#fff;">4:02 p.m.</span>
<span class="t" style="left:646.75px;top:449.03px;font-size:4.615px;font-family:'Liberation Sans', sans-serif;font-weight:400;font-style:normal;color:#fff;">5/12/2024</span>
<span class="t" style="left:679.60px;top:448.03px;font-size:4.000px;font-family:'Liberation Sans', sans-serif;font-weight:400;font-style:normal;color:#fff;">2</span>
</div>
<div id="ttl"><span class="t" style="left:69.00px;top:84.02px;font-size:9.670px;font-family:'Liberation Sans', sans-serif;font-weight:400;font-style:normal;color:#111;-webkit-text-stroke:0.2px #111;"><span style="letter-spacing:-0.300px;margin-left:0.00px">PANTALLAZO</span> <span style="letter-spacing:-0.340px;margin-left:0.91px">SITCO</span> <span style="letter-spacing:-0.350px;margin-left:1.21px">ID</span> <span style="letter-spacing:0.100px;margin-left:0.91px">214923</span> <span style="letter-spacing:0.060px;margin-left:0.31px">PACCO</span> <span style="letter-spacing:0.140px;margin-left:0.31px">29507</span></span></div>
</body></html>
